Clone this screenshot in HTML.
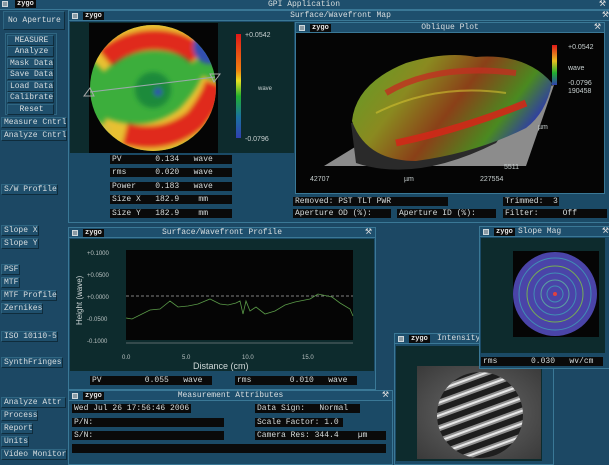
<!DOCTYPE html>
<html><head><meta charset="utf-8"><style>
*{margin:0;padding:0;box-sizing:border-box}
body{width:609px;height:461px;overflow:hidden;background:#1c4864;font-family:"Liberation Mono",monospace;font-size:8px;color:#d6dcdc;position:relative}
.a{position:absolute}
.btn{position:absolute;background:#1f4f6c;border:1px solid #2f6682;border-right-color:#0f2c3c;border-bottom-color:#0f2c3c;height:11px;line-height:10px;padding-left:2px;font-size:8px;color:#d8dee0;white-space:pre}
.win{position:absolute;background:#1b4a66;border:1px solid #3a7896}
.tb{position:absolute;left:0;right:0;top:0;height:10px;background:#1e4f6d;border-bottom:1px solid #3a7896;font-size:8px;line-height:10px;text-align:center;color:#d8dee0}
.sq{position:absolute;left:3px;top:2px;width:6px;height:6px;background:#8a9aa4;border:1px solid #cfd8dc}
.zy{position:absolute;left:14px;top:1px;height:8px;padding:0 2px;background:#0b0b0b;color:#e8e8e8;font-size:7px;line-height:8px;font-weight:bold}
.wr{position:absolute;right:3px;top:1px;font-size:8px;line-height:8px;color:#e0e0e0}
.dk{position:absolute;background:#0d2b2d}
.bx{position:absolute;background:#0a0a0a;height:9px;line-height:9px;font-size:8px;color:#d6dcdc;white-space:pre;padding-left:2px}
</style></head><body>
<div class="a" style="left:0;top:0;width:609px;height:10px;background:#1e4f6d;border-bottom:1px solid #3a7896"></div>
<div class="sq" style="left:2px;top:1px"></div>
<div class="zy" style="left:15px;top:0">zygo</div>
<div class="a" style="left:268px;top:0;line-height:10px">GPI Application</div>
<div class="wr" style="top:1px">&#x2692;</div>

<div class="btn" style="left:3px;top:11px;width:62px;height:19px;line-height:17px;padding-left:4px">No Aperture</div>
<div class="a" style="left:5px;top:33px;width:52px;height:82px;border:1px solid #2f6682;background:#1a4762"></div>
<div class="btn" style="left:7px;top:35px;width:47px;text-align:center">MEASURE</div>
<div class="btn" style="left:7px;top:46px;width:47px;text-align:center">Analyze</div>
<div class="btn" style="left:7px;top:58px;width:47px">Mask Data</div>
<div class="btn" style="left:7px;top:69px;width:47px">Save Data</div>
<div class="btn" style="left:7px;top:81px;width:47px">Load Data</div>
<div class="btn" style="left:7px;top:92px;width:47px">Calibrate</div>
<div class="btn" style="left:7px;top:104px;width:47px;text-align:center">Reset</div>
<div class="btn" style="left:1px;top:117px;width:66px">Measure Cntrl</div>
<div class="btn" style="left:1px;top:130px;width:66px">Analyze Cntrl</div>
<div class="btn" style="left:1px;top:184px;width:57px">S/W Profile</div>
<div class="btn" style="left:1px;top:225px;width:38px">Slope X</div>
<div class="btn" style="left:1px;top:238px;width:38px">Slope Y</div>
<div class="btn" style="left:1px;top:264px;width:19px">PSF</div>
<div class="btn" style="left:1px;top:277px;width:19px">MTF</div>
<div class="btn" style="left:1px;top:290px;width:56px">MTF Profile</div>
<div class="btn" style="left:1px;top:303px;width:42px">Zernikes</div>
<div class="btn" style="left:1px;top:331px;width:57px">ISO 10110-5</div>
<div class="btn" style="left:1px;top:357px;width:62px">SynthFringes</div>
<div class="btn" style="left:1px;top:397px;width:65px">Analyze Attr</div>
<div class="btn" style="left:1px;top:410px;width:37px">Process</div>
<div class="btn" style="left:1px;top:423px;width:32px">Report</div>
<div class="btn" style="left:1px;top:436px;width:28px">Units</div>
<div class="btn" style="left:1px;top:449px;width:66px">Video Monitor</div>

<div class="win" style="left:68px;top:10px;width:545px;height:213px">
 <div class="tb">Surface/Wavefront Map</div>
 <div class="sq"></div><div class="zy">zygo</div><div class="wr">&#x2692;</div>
</div>
<div class="dk" style="left:70px;top:22px;width:224px;height:131px"></div>
<div class="a" style="left:89px;top:23px;width:129px;height:130px;background:#050505"></div>
<svg class="a" style="left:70px;top:22px" width="224" height="131">
 <defs>
  <clipPath id="c1"><circle cx="83" cy="66" r="63"/></clipPath>
  <filter id="bl"><feGaussianBlur stdDeviation="2.5"/></filter>
  <linearGradient id="cb" x1="0" y1="0" x2="0" y2="1">
   <stop offset="0" stop-color="#e01818"/><stop offset=".35" stop-color="#f08010"/><stop offset=".45" stop-color="#e8e020"/><stop offset=".6" stop-color="#20b030"/><stop offset=".8" stop-color="#1a70a0"/><stop offset="1" stop-color="#3040b0"/>
  </linearGradient>
 </defs>
 <g clip-path="url(#c1)">
  <rect x="0" y="0" width="224" height="131" fill="#3cae3c"/>
  <g filter="url(#bl)">
   <path d="M22 38 Q50 10 90 12 Q120 14 135 30" stroke="#e8c030" stroke-width="34" fill="none"/>
   <path d="M35 36 Q60 16 90 18 Q115 20 128 34" stroke="#e02a1a" stroke-width="20" fill="none"/>
   <path d="M30 112 Q80 130 120 100 Q140 80 148 60" stroke="#e8c030" stroke-width="34" fill="none"/>
   <path d="M55 112 Q95 122 125 98 Q140 80 146 62" stroke="#e02a1a" stroke-width="22" fill="none"/>
   <path d="M10 90 Q20 110 40 110" stroke="#d8c040" stroke-width="14" fill="none"/>
   <circle cx="140" cy="25" r="17" fill="#3050b0"/>
   <circle cx="83" cy="68" r="18" fill="#1f8a3a"/>
   <circle cx="88" cy="70" r="4" fill="#3050b0"/>
  </g>
 </g>
 <line x1="20" y1="70" x2="145" y2="55" stroke="#9aa" stroke-width="1"/>
 <path d="M14 74 L24 74 L20 66 Z M140 52 L150 52 L144 60 Z" fill="none" stroke="#aaa"/>
 <rect x="166" y="12" width="5" height="104" fill="url(#cb)"/>
 <text x="175" y="15" font-size="7" fill="#c8d0d0" font-family="Liberation Sans">+0.0542</text>
 <text x="188" y="68" font-size="6" fill="#c8d0d0" font-family="Liberation Sans">wave</text>
 <text x="175" y="119" font-size="7" fill="#c8d0d0" font-family="Liberation Sans">-0.0796</text>
</svg>
<div class="bx" style="left:110px;top:155px;width:122px">PV       0.134   wave</div>
<div class="bx" style="left:110px;top:168px;width:122px">rms      0.020   wave</div>
<div class="bx" style="left:110px;top:182px;width:122px">Power    0.183   wave</div>
<div class="bx" style="left:110px;top:195px;width:122px">Size X   182.9    mm</div>
<div class="bx" style="left:110px;top:209px;width:122px">Size Y   182.9    mm</div>

<div class="win" style="left:295px;top:22px;width:310px;height:172px;background:#050505">
 <div class="tb">Oblique Plot</div>
 <div class="sq"></div><div class="zy">zygo</div><div class="wr">&#x2692;</div>
</div>
<svg class="a" style="left:296px;top:33px" width="308" height="160">
 <defs>
  <linearGradient id="ob" x1="0" y1="0" x2="1" y2=".4">
   <stop offset="0" stop-color="#5aa028"/><stop offset=".35" stop-color="#8a8a20"/><stop offset=".6" stop-color="#8a4018"/><stop offset=".85" stop-color="#4a8a20"/><stop offset="1" stop-color="#3040a0"/>
  </linearGradient>
  <linearGradient id="cb2" x1="0" y1="0" x2="0" y2="1">
   <stop offset="0" stop-color="#e01818"/><stop offset=".4" stop-color="#e8c020"/><stop offset=".7" stop-color="#20b030"/><stop offset="1" stop-color="#3040b0"/>
  </linearGradient>
 </defs>
 <polygon points="28,133 90,95 258,52 230,133" fill="#8c8c8c"/>
 <path d="M55 90 L60 130 Q120 150 200 110 L228 72 Z" fill="#2a2a2a"/>
 <path d="M56 88 Q60 50 110 30 Q150 18 180 24 Q230 20 256 50 Q250 80 230 95 Q180 120 120 128 Q70 128 56 88 Z" fill="url(#ob)"/>
 <path d="M90 60 Q140 30 220 40" stroke="#c03020" stroke-width="6" fill="none" opacity=".8"/>
 <path d="M100 110 Q170 95 230 70" stroke="#d02818" stroke-width="7" fill="none" opacity=".9"/>
 <path d="M80 80 Q140 50 210 60" stroke="#d0c030" stroke-width="2" fill="none" opacity=".6"/>
 <rect x="256" y="12" width="5" height="40" fill="url(#cb2)"/>
 <text x="272" y="16" font-size="7" fill="#c8d0d0" font-family="Liberation Sans">+0.0542</text>
 <text x="272" y="37" font-size="7" fill="#c8d0d0" font-family="Liberation Sans">wave</text>
 <text x="272" y="52" font-size="7" fill="#c8d0d0" font-family="Liberation Sans">-0.0796</text>
 <text x="272" y="60" font-size="7" fill="#c8d0d0" font-family="Liberation Sans">190458</text>
 <text x="242" y="96" font-size="7" fill="#c8d0d0" font-family="Liberation Sans">µm</text>
 <text x="208" y="136" font-size="7" fill="#c8d0d0" font-family="Liberation Sans">5511</text>
 <text x="14" y="148" font-size="7" fill="#c8d0d0" font-family="Liberation Sans">42707</text>
 <text x="108" y="148" font-size="7" fill="#c8d0d0" font-family="Liberation Sans">µm</text>
 <text x="184" y="148" font-size="7" fill="#c8d0d0" font-family="Liberation Sans">227554</text>
</svg>
<div class="bx" style="left:293px;top:197px;width:155px">Removed: PST TLT PWR</div>
<div class="bx" style="left:503px;top:197px;width:56px">Trimmed:  3</div>
<div class="bx" style="left:293px;top:209px;width:98px">Aperture OD (%):</div>
<div class="bx" style="left:397px;top:209px;width:99px">Aperture ID (%):</div>
<div class="bx" style="left:503px;top:209px;width:104px">Filter:     Off</div>

<div class="win" style="left:68px;top:227px;width:308px;height:163px">
 <div class="tb">Surface/Wavefront Profile</div>
 <div class="sq"></div><div class="zy">zygo</div><div class="wr">&#x2692;</div>
</div>
<div class="dk" style="left:70px;top:239px;width:304px;height:132px"></div>
<svg class="a" style="left:70px;top:239px" width="304" height="132" font-family="Liberation Sans">
 <rect x="56" y="11" width="227" height="90" fill="#050505"/>
 <g fill="#b8c0c0" font-size="6">
  <text x="17" y="16">+0.1000</text><text x="17" y="38">+0.0500</text><text x="17" y="60">+0.0000</text><text x="17" y="82">-0.0500</text><text x="17" y="104">-0.1000</text>
  <text x="52" y="120">0.0</text><text x="112" y="120">5.0</text><text x="172" y="120">10.0</text><text x="232" y="120">15.0</text>
 </g>
 <text x="123" y="130" font-size="9" fill="#d0d8d8">Distance (cm)</text>
 <text transform="translate(12,86) rotate(-90)" font-size="8" fill="#d0d8d8">Height (wave)</text>
 <line x1="56" y1="57" x2="283" y2="57" stroke="#aaa" stroke-dasharray="3,2" stroke-width=".7"/>
 <path d="M56 79 L62 80 L70 76 L80 71 L90 70 L100 62 L108 68 L118 67 L128 65 L140 60 L150 65 L158 66 L166 64 L170 62 L173 75 L176 62 L180 72 L186 68 L195 75 L205 72 L215 66 L225 63 L240 60 L248 55 L262 58 L270 64 L280 70 L283 77" fill="none" stroke="#5a9a48" stroke-width=".8"/>
 <line x1="56" y1="104" x2="283" y2="104" stroke="#aaa" stroke-width=".6"/>
</svg>
<div class="bx" style="left:90px;top:376px;width:122px">PV         0.055   wave</div>
<div class="bx" style="left:235px;top:376px;width:122px">rms        0.010   wave</div>

<div class="win" style="left:68px;top:390px;width:325px;height:75px">
 <div class="tb">Measurement Attributes</div>
 <div class="sq"></div><div class="zy">zygo</div><div class="wr">&#x2692;</div>
</div>
<div class="bx" style="left:72px;top:404px;width:119px">Wed Jul 26 17:56:46 2006</div>
<div class="bx" style="left:72px;top:418px;width:152px">P/N:</div>
<div class="bx" style="left:72px;top:431px;width:152px">S/N:</div>
<div class="bx" style="left:255px;top:404px;width:105px">Data Sign:   Normal</div>
<div class="bx" style="left:255px;top:418px;width:88px">Scale Factor: 1.0</div>
<div class="bx" style="left:255px;top:431px;width:131px">Camera Res: 344.4    µm</div>
<div class="bx" style="left:72px;top:444px;width:314px"></div>

<div class="win" style="left:394px;top:333px;width:160px;height:132px">
 <div class="tb" style="text-align:left;padding-left:42px">Intensity</div>
 <div class="sq"></div><div class="zy">zygo</div>
</div>
<div class="dk" style="left:396px;top:346px;width:146px;height:115px"></div>
<svg class="a" style="left:417px;top:366px" width="124" height="93">
 <defs>
  <radialGradient id="gb" cx=".5" cy=".5" r=".7"><stop offset="0" stop-color="#6a6a6a"/><stop offset="1" stop-color="#3a3a3a"/></radialGradient>
  <clipPath id="c2"><circle cx="63" cy="49" r="43"/></clipPath>
  <pattern id="fr" width="124" height="12" patternUnits="userSpaceOnUse" patternTransform="rotate(-20)">
   <rect width="124" height="12" fill="#1e1e1e"/><rect y="3" width="124" height="6" fill="#909090"/><rect y="5" width="124" height="2" fill="#e8e8e8"/>
  </pattern>
 </defs>
 <rect width="124" height="93" fill="url(#gb)"/>
 <rect width="124" height="93" fill="url(#fr)" clip-path="url(#c2)"/>
</svg>

<div class="win" style="left:479px;top:226px;width:134px;height:143px">
 <div class="tb" style="text-align:left;padding-left:38px">Slope Mag</div>
 <div class="sq"></div><div class="zy">zygo</div><div class="wr">&#x2692;</div>
</div>
<div class="dk" style="left:481px;top:238px;width:124px;height:115px"></div>
<svg class="a" style="left:513px;top:251px" width="86" height="86">
 <rect width="86" height="86" fill="#050505"/>
 <circle cx="42" cy="43" r="42" fill="#4a44a8"/>
 <g fill="none" stroke="#40a0b8" stroke-width="1" opacity=".8">
  <circle cx="42" cy="43" r="36"/><circle cx="42" cy="43" r="28" stroke="#80c840"/><circle cx="42" cy="43" r="21"/><circle cx="42" cy="43" r="14" stroke="#60b8a0"/><circle cx="42" cy="43" r="8"/>
 </g>
 <circle cx="42" cy="43" r="2" fill="#e04040"/>
</svg>
<div class="bx" style="left:481px;top:357px;width:122px">rms       0.030   wv/cm</div>
</body></html>
